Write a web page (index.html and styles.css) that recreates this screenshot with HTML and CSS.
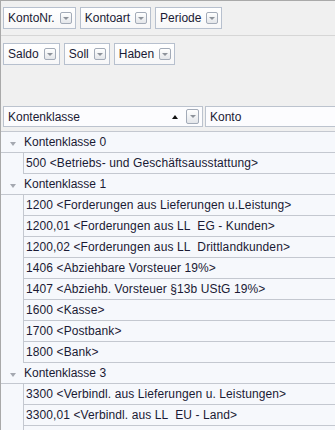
FILE: index.html
```html
<!DOCTYPE html>
<html>
<head>
<meta charset="utf-8">
<link rel="stylesheet" href="styles.css">
</head>
<body>
<div class="panel">
  <div class="frow first">
    <div class="fbtn"><span>KontoNr.</span><span class="dd"></span></div>
    <div class="fbtn"><span>Kontoart</span><span class="dd"></span></div>
    <div class="fbtn"><span>Periode</span><span class="dd"></span></div>
  </div>
  <div class="sep"></div>
  <div class="frow">
    <div class="fbtn"><span>Saldo</span><span class="dd"></span></div>
    <div class="fbtn"><span>Soll</span><span class="dd"></span></div>
    <div class="fbtn"><span>Haben</span><span class="dd"></span></div>
  </div>
  <div class="header">
    <div class="hcell main"><span class="htext">Kontenklasse</span><span class="sort"></span><span class="dd big"></span></div>
    <div class="hcell konto"><span class="htext">Konto</span></div>
  </div>
  <div class="grid">
    <div class="grp"><span class="caret"></span><span class="gtext">Kontenklasse 0</span></div>
    <div class="row"><span class="ind"></span><span class="cell">500 &lt;Betriebs- und Geschäftsausstattung&gt;</span></div>
    <div class="grp"><span class="caret"></span><span class="gtext">Kontenklasse 1</span></div>
    <div class="row"><span class="ind"></span><span class="cell">1200 &lt;Forderungen aus Lieferungen u.Leistung&gt;</span></div>
    <div class="row"><span class="ind"></span><span class="cell">1200,01 &lt;Forderungen aus LL&nbsp; EG - Kunden&gt;</span></div>
    <div class="row"><span class="ind"></span><span class="cell">1200,02 &lt;Forderungen aus LL&nbsp; Drittlandkunden&gt;</span></div>
    <div class="row"><span class="ind"></span><span class="cell">1406 &lt;Abziehbare Vorsteuer 19%&gt;</span></div>
    <div class="row"><span class="ind"></span><span class="cell">1407 &lt;Abziehb. Vorsteuer §13b UStG 19%&gt;</span></div>
    <div class="row"><span class="ind"></span><span class="cell">1600 &lt;Kasse&gt;</span></div>
    <div class="row"><span class="ind"></span><span class="cell">1700 &lt;Postbank&gt;</span></div>
    <div class="row"><span class="ind"></span><span class="cell">1800 &lt;Bank&gt;</span></div>
    <div class="grp"><span class="caret"></span><span class="gtext">Kontenklasse 3</span></div>
    <div class="row"><span class="ind"></span><span class="cell">3300 &lt;Verbindl. aus Lieferungen u. Leistungen&gt;</span></div>
    <div class="row"><span class="ind"></span><span class="cell">3300,01 &lt;Verbindl. aus LL&nbsp; EU - Land&gt;</span></div>
    <div class="row"><span class="ind"></span><span class="cell"></span></div>
  </div>
</div>
</body>
</html>
```
FILE: styles.css
```css
html, body {
  margin: 0;
  padding: 0;
}
body {
  font-family: "Liberation Sans", Arial, sans-serif;
  font-size: 12px;
  color: #1a1a34;
  background: #f0f0f0;
}
.panel {
  height: 430px;
  box-sizing: border-box;
  border-top: 1px solid #a9a9a9;
  border-left: 1px solid #a9a9a9;
  background: #f0f0f0;
  overflow: hidden;
}
.frow {
  display: flex;
  gap: 4px;
  padding-left: 2px;
  height: 22px;
}
.frow.first {
  margin-top: 6px;
}
.sep {
  height: 1px;
  background: #d6d6d6;
  margin: 6px 0 7px 0;
}
.fbtn {
  display: flex;
  align-items: center;
  gap: 5px;
  height: 22px;
  box-sizing: border-box;
  padding: 0 3px 0 4px;
  border: 1px solid #b7c0ce;
  background: linear-gradient(#ffffff, #f7f7f8);
  white-space: nowrap;
}
.dd {
  display: flex;
  align-items: center;
  justify-content: center;
  width: 12px;
  height: 12px;
  box-sizing: border-box;
  border: 1px solid #a3abb8;
  border-radius: 2px;
  background: linear-gradient(#ffffff, #e4e6ea);
  flex: none;
}
.dd::after {
  content: "";
  width: 0;
  height: 0;
  border-left: 3px solid transparent;
  border-right: 3px solid transparent;
  border-top: 3px solid #8e939b;
}
.dd.big {
  width: 13px;
  height: 15px;
}
.header {
  display: flex;
  gap: 2px;
  margin-top: 41px;
  padding-left: 2px;
  height: 21px;
}
.hcell {
  display: flex;
  align-items: center;
  box-sizing: border-box;
  height: 21px;
  border: 1px solid #bcc3ce;
  background: #fcfcfe;
  padding-left: 4px;
}
.hcell.main {
  width: 200px;
  flex: none;
  padding-right: 3px;
}
.hcell.konto {
  flex: 1;
  border-right: none;
}
.htext {
  flex: 1;
}
.sort {
  width: 0;
  height: 0;
  border-left: 3px solid transparent;
  border-right: 3px solid transparent;
  border-bottom: 4px solid #111111;
  margin-right: 8px;
}
.grid {
  margin-top: 4px;
  border-top: 1px solid #c4c8d0;
  background: #f6f8fc;
}
.grp {
  display: flex;
  align-items: center;
  height: 21px;
  box-sizing: border-box;
  border-bottom: 1px solid #c4c8d0;
}
.caret {
  width: 23px;
  display: flex;
  justify-content: center;
  padding-top: 3px;
  box-sizing: border-box;
}
.caret::after {
  content: "";
  width: 0;
  height: 0;
  border-left: 3px solid transparent;
  border-right: 3px solid transparent;
  border-top: 4px solid #a4a8b0;
}
.row {
  display: flex;
  height: 21px;
}
.ind {
  width: 22px;
  flex: none;
  border-right: 1px solid #c4c8d0;
}
.cell {
  flex: 1;
  display: flex;
  align-items: center;
  box-sizing: border-box;
  padding-left: 2px;
  border-bottom: 1px solid #c4c8d0;
  white-space: nowrap;
  letter-spacing: 0.1px;
}
```
